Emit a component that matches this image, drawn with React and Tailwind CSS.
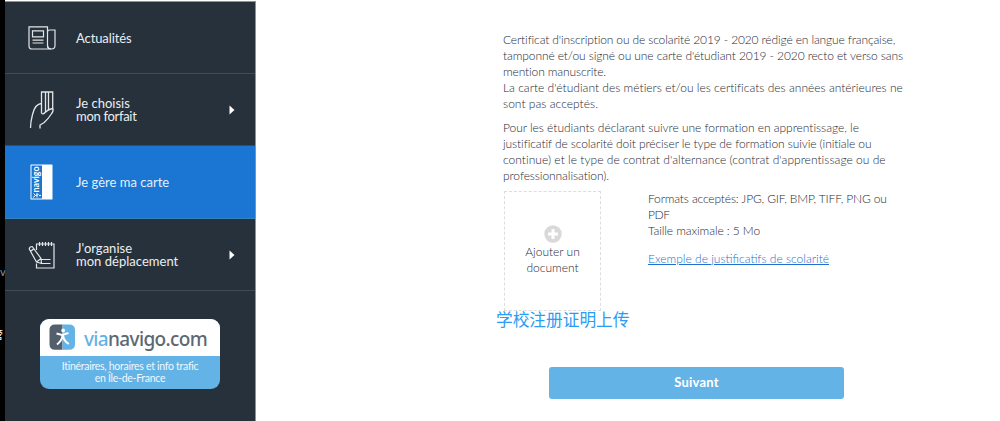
import { clsx } from 'clsx'

function NewsIcon() {
  return (
    <svg width="28" height="24" viewBox="0 0 28 24" fill="none" stroke="#e3e6e8" strokeWidth="1.2">
      <path d="M1 .8h18.500v19q0 3.200 3.500 3.200H4Q1 23 1 20z" />
      <path d="M19.500 6q0-2 2-2H27v15.500q0 3.500-3.500 3.500t-4-3.500" />
      <path d="M4.500 4.800h11v6h-11zM4.500 14.200h11M4.500 17h11" />
    </svg>
  )
}

function HandIcon() {
  return (
    <svg width="28" height="38" viewBox="0 0 28 38" fill="none" stroke="#e3e6e8" strokeWidth="1.3">
      <path d="M13.500 22.500V1h11.200v17M17.500 1v20M20.500 1v18.500" />
      <path d="M13.500 12.500C8.500 12.800 6 17 4.500 23.500 3.300 28 2.500 32 2.500 37" />
      <path d="M13.500 22.500q2 1 3.500-1 3.500-3.500 7.500-4 1.500 2-.8 5-4 6-7.500 9L12 34v3.500" />
    </svg>
  )
}

function CardIcon() {
  return (
    <svg width="24" height="36" viewBox="0 0 24 36">
      <rect x=".5" y=".5" width="22" height="35" rx=".5" fill="#fff" />
      <rect x="1.500" y="1.500" width="10.500" height="33" fill="#1a76d2" />
      <g fill="none" stroke="#fff" strokeWidth="1">
        <path d="M8.500 30.500 5.500 31.500 3 33.500M5.500 31.500 3.500 29.500M7 33.500V29" />
        <circle cx="10" cy="31.500" r=".5" fill="#fff" />
      </g>
      <text
        transform="translate(9 28.500) rotate(-90)"
        fill="#fff"
        fontSize="9.500"
        fontWeight="bold"
        fontFamily="Lato, sans-serif"
        textLength="26"
        lengthAdjust="spacingAndGlyphs"
      >
        navigo
      </text>
    </svg>
  )
}

function NotepadIcon() {
  return (
    <svg width="28" height="28" viewBox="0 0 28 28" fill="none" stroke="#e3e6e8" strokeWidth="1.2">
      <path d="M8.500 9V3H26v24H8.500v-4.500" />
      <path d="M11.500 1v4M14.500 1v4M17.500 1v4M20.500 1v4M23.500 1v4" />
      <path d="M1.200 8q.3-2.500 3-2.500L13 17.500l.5 5-5-1.500zM2.500 10.500l3-2.500M8.500 21l4.500-3.500M13.500 18.500h9M13.500 22.500h9" />
    </svg>
  )
}

function WalkerLogo() {
  return (
    <svg width="27" height="27" viewBox="0 0 27 27">
      <path d="M13.500.5H6Q.5.500.5 6v14q0 5.800 5.500 5.800h7.500z" fill="#535f6c" />
      <path d="M13.500.5H20q6 0 6 5.500v14q0 5.800-6 5.800h-6.500z" fill="#64b3e6" />
      <circle cx="14.200" cy="6.500" r="1.900" fill="#fff" />
      <path
        d="M7.500 9.500 13 11l6.500-2M13.500 11.500q-.5 5-5.500 9M14 11.500q.8 5.500 5.800 8.500"
        fill="none"
        stroke="#fff"
        strokeWidth="2"
      />
    </svg>
  )
}

const menu = [
  { icon: NewsIcon, lines: [['Actualités', 'tracking-[-0.100px]']] },
  { icon: HandIcon, lines: [['Je choisis', 'tracking-[0.010px]'], ['mon forfait', 'tracking-[-0.300px]']], arrow: true },
  { icon: CardIcon, lines: [['Je gère ma carte', 'tracking-[0.010px]']], active: true },
  { icon: NotepadIcon, lines: [["J'organise", 'tracking-[0.010px]'], ['mon déplacement', 'tracking-[0.020px]']], arrow: true },
]

const certificate = [
  ["Certificat d'inscription ou de scolarité 2019 - 2020 rédigé en langue française,", 'tracking-[-0.130px]'],
  ["tamponné et/ou signé ou une carte d'étudiant 2019 - 2020 recto et verso sans", 'tracking-[-0.100px]'],
  ['mention manuscrite.', 'tracking-[-0.120px]'],
  ["La carte d'étudiant des métiers et/ou les certificats des années antérieures ne", 'tracking-[0.010px]'],
  ['sont pas acceptés.', 'tracking-[0.030px]'],
]

const apprenticeship = [
  ['Pour les étudiants déclarant suivre une formation en apprentissage, le', 'tracking-[-0.030px]'],
  ['justificatif de scolarité doit préciser le type de formation suivie (initiale ou', 'tracking-[-0.100px]'],
  ["continue) et le type de contrat d'alternance (contrat d'apprentissage ou de", 'tracking-[0.030px]'],
  ['professionnalisation).', 'tracking-[-0.080px]'],
]

const formats = [
  ['Formats acceptés: JPG, GIF, BMP, TIFF, PNG ou', 'tracking-[-0.150px]'],
  ['PDF', 'tracking-[-0.400px]'],
  ['Taille maximale : 5 Mo', 'tracking-[-0.090px]'],
]

function Lines({ lines }) {
  return lines.map(([text, tracking]) => (
    <span key={text} className={clsx('block whitespace-nowrap', tracking)}>
      {text}
    </span>
  ))
}

export default function App() {
  return (
    <div className="flex h-[421px] w-[1000px] overflow-hidden bg-white font-['Lato',sans-serif] text-xs">
      {/* Sliver of the window behind */}
      <div className="flex w-[5px] shrink-0 flex-col overflow-hidden bg-black pt-[264px] text-[11px] leading-4 text-[#8794a0]">
        <span>v</span>
        <span className="mt-[46px] -ml-2 font-['Noto_Sans_CJK_SC',sans-serif] text-white">管</span>
        <span className="mt-[46px] ml-px">⋮</span>
      </div>

      {/* Sidebar */}
      <aside className="mt-px w-[251px] shrink-0 border-t border-r border-t-[#8b9299] border-r-[#8b9299] bg-[#27313b]">
        <nav>
          {menu.map(({ icon: Icon, lines, arrow, active }, i) => (
            <div
              key={i}
              className={clsx(
                'flex items-center border-b text-[13px] leading-[13px]',
                active
                  ? 'h-[73px] border-[#3582bc] bg-[#1a76d2] text-[#e4effa]'
                  : 'h-[72px] border-[#414b55] text-[#eceef0]'
              )}
            >
              <div className="flex w-[71px] justify-center pl-[3px]">
                <Icon />
              </div>
              <div className="flex-1 pt-px">
                <Lines lines={lines} />
              </div>
              {arrow && (
                <svg width="6" height="10" viewBox="0 0 6 10" className="mr-5">
                  <path d="M.5.5 5.500 5 .5 9.500z" fill="#fff" />
                </svg>
              )}
            </div>
          ))}
        </nav>

        <a className="mt-7 ml-[35px] block h-[70px] w-[180px] overflow-hidden rounded-[9px] bg-[#64b3e6]">
          <div className="flex h-[37px] items-center bg-white pl-[9px]">
            <WalkerLogo />
            <span className="ml-2 pt-0.5 font-['Noto_Sans',sans-serif] text-[19px] leading-6 font-medium tracking-[-0.650px] whitespace-nowrap text-[#5c6873]">
              <span className="text-[#64b3e6]">via</span>navigo.com
            </span>
          </div>
          <p className="pt-1 text-center text-[10.500px] leading-3 tracking-[-0.280px] text-[#eff8fd]">
            Itinéraires, horaires et info trafic
            <br />
            en Île-de-France
          </p>
        </a>
      </aside>

      {/* Upload form */}
      <main className="flex-1 pt-8 pl-[247px] leading-4 font-light text-[#1f2a35]">
        <p>
          <Lines lines={certificate} />
        </p>
        <p className="mt-2">
          <Lines lines={apprenticeship} />
        </p>

        <div className="mt-[7px] flex">
          <button className="ml-px flex h-[120px] w-[97px] flex-col items-center border border-dashed border-[#dddddd] pt-[33px]">
            <svg width="18" height="18" viewBox="0 0 18 18">
              <circle cx="9" cy="9" r="8.700" fill="#d9d9d9" />
              <path d="M9 4v10M4 9h10" stroke="#fff" strokeWidth="3" />
            </svg>
            <span className="mt-px">
              Ajouter un
              <br />
              document
            </span>
          </button>
          <div className="ml-[47px]">
            <Lines lines={formats} />
            <a className="mt-3 block whitespace-nowrap text-[#1f70d0] underline">
              Exemple de justificatifs de scolarité
            </a>
          </div>
        </div>

        <p className="-mt-0.5 -ml-[7px] font-['Noto_Sans_CJK_SC',sans-serif] text-[16.700px] leading-5 font-normal text-[#2b9cf5]">
          学校注册证明上传
        </p>

        <button className="mt-[38px] ml-[46px] h-8 w-[295px] rounded-[3px] bg-[#64b3e6] pb-0.5 text-[13px] font-bold tracking-[0.200px] text-white">
          Suivant
        </button>
      </main>
    </div>
  )
}
